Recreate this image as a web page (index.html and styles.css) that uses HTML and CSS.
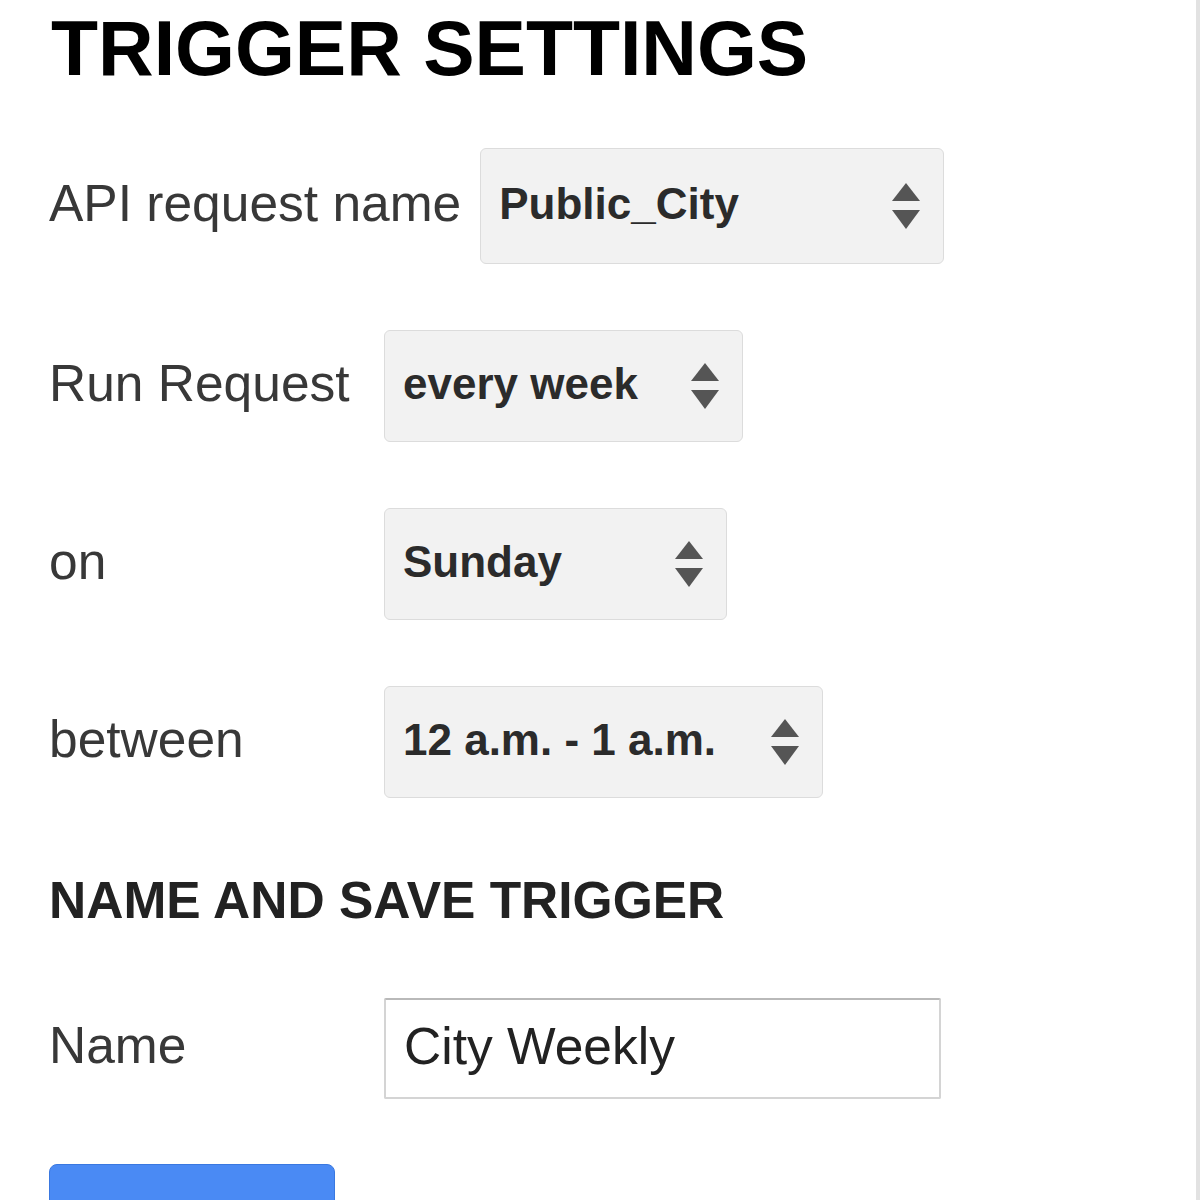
FILE: index.html
```html
<!DOCTYPE html>
<html lang="en">
<head>
<meta charset="utf-8">
<title>Trigger settings</title>
<link rel="stylesheet" href="styles.css">
</head>
<body>
<div class="panel">
  <h1 class="title">TRIGGER SETTINGS</h1>

  <div class="row row-api">
    <span class="label label-inline">API request name</span>
    <div class="select select-api">
      <span class="value">Public_City</span>
      <svg class="arrows" viewBox="0 0 30 48" width="30" height="48" aria-hidden="true">
        <path d="M15 1 L29 19 H1 Z" />
        <path d="M1 28 H29 L15 47 Z" />
      </svg>
    </div>
  </div>

  <div class="row">
    <span class="label">Run Request</span>
    <div class="select select-freq">
      <span class="value">every week</span>
      <svg class="arrows" viewBox="0 0 30 48" width="30" height="48" aria-hidden="true">
        <path d="M15 1 L29 19 H1 Z" />
        <path d="M1 28 H29 L15 47 Z" />
      </svg>
    </div>
  </div>

  <div class="row">
    <span class="label">on</span>
    <div class="select select-day">
      <span class="value">Sunday</span>
      <svg class="arrows" viewBox="0 0 30 48" width="30" height="48" aria-hidden="true">
        <path d="M15 1 L29 19 H1 Z" />
        <path d="M1 28 H29 L15 47 Z" />
      </svg>
    </div>
  </div>

  <div class="row">
    <span class="label">between</span>
    <div class="select select-time">
      <span class="value">12 a.m. - 1 a.m.</span>
      <svg class="arrows" viewBox="0 0 30 48" width="30" height="48" aria-hidden="true">
        <path d="M15 1 L29 19 H1 Z" />
        <path d="M1 28 H29 L15 47 Z" />
      </svg>
    </div>
  </div>

  <h2 class="subtitle">NAME AND SAVE TRIGGER</h2>

  <div class="row row-name">
    <span class="label">Name</span>
    <div class="input">City Weekly</div>
  </div>

  <button class="btn" type="button" aria-label="Save"></button>
</div>
</body>
</html>
```

FILE: styles.css
```css
html, body {
  margin: 0;
  padding: 0;
  height: 1200px;
  overflow: hidden;
  background: #ffffff;
}

.panel {
  box-sizing: border-box;
  width: 1200px;
  height: 1200px;
  padding-left: 49px;
  border-right: 4px solid #e2e2e2;
  font-family: "Liberation Sans", Arial, sans-serif;
  color: #333333;
}

.title {
  margin: 0;
  padding-top: 10px;
  padding-left: 2px;
  font-size: 77px;
  line-height: 1;
  font-weight: 700;
  color: #000000;
}

.row {
  display: flex;
  align-items: center;
  margin-top: 66px;
}

.row-api {
  margin-top: 61px;
}

.label {
  width: 335px;
  flex: none;
  padding-bottom: 6px;
  font-size: 51.5px;
  color: #383838;
}

.label-inline {
  width: auto;
  margin-right: 19px;
}

.select {
  box-sizing: border-box;
  height: 112px;
  display: flex;
  align-items: center;
  justify-content: space-between;
  padding: 0 22px 0 18px;
  background: #f2f2f2;
  border: 1.5px solid #dcdcdc;
  border-radius: 6px;
  font-size: 44px;
  font-weight: 700;
  color: #2b2b2b;
}

.select .value {
  padding-bottom: 4px;
}

.select-api { width: 464px; height: 116px; }
.select-freq { width: 359px; }
.select-day { width: 343px; }
.select-time { width: 439px; }

.arrows {
  flex: none;
  fill: #555555;
}

.subtitle {
  margin: 77px 0 0 0;
  font-size: 51.5px;
  line-height: 1;
  font-weight: 700;
  color: #222222;
}

.row-name {
  margin-top: 71px;
}

.input {
  box-sizing: border-box;
  width: 557px;
  height: 101px;
  display: flex;
  align-items: center;
  padding-left: 18px;
  padding-bottom: 4px;
  border: 2px solid #d4d4d4;
  border-top-color: #b9b9b9;
  border-radius: 2px;
  font-size: 51.5px;
  color: #222222;
  background: #ffffff;
}

.btn {
  display: block;
  margin-top: 65px;
  width: 286px;
  height: 116px;
  background: #4a8af4;
  border: 1.5px solid #3a78e0;
  border-radius: 8px;
}
```
